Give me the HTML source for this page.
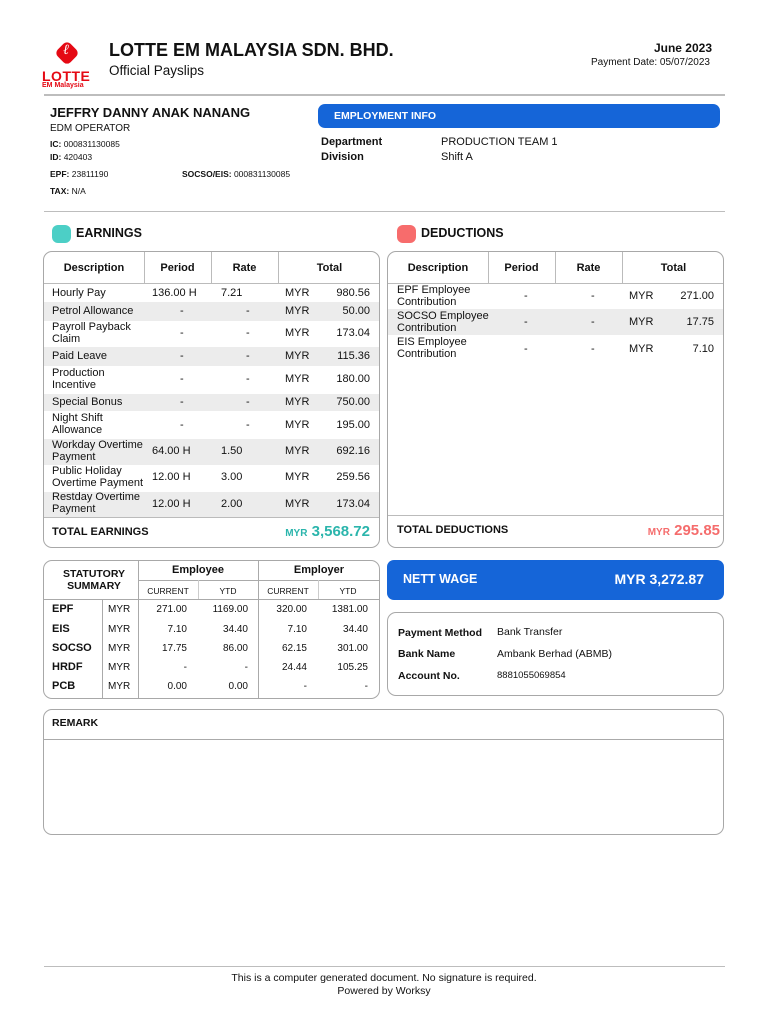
<!DOCTYPE html><html><head><meta charset="utf-8"><style>
*{margin:0;padding:0;box-sizing:border-box}
body{width:768px;height:1024px;background:#fff;font-family:"Liberation Sans",Arial,sans-serif;color:#111;position:relative;overflow:hidden}
.a{position:absolute;white-space:nowrap}
.b{font-weight:bold}
.box{position:absolute;border:1px solid #a8a8a8;border-radius:9px;overflow:hidden}
.row{position:absolute;left:0;right:0}
.g{background:#ececec}
.t{position:absolute;font-size:11px;line-height:12px;white-space:nowrap}
.hl{position:absolute;background:#bdbdbd}
.w{position:absolute;left:0;top:0;width:768px;height:1024px}
</style></head><body>
<!-- logo -->
<div class="a" style="left:58px;top:44px;width:18px;height:18px;background:#e50914;border-radius:5px;transform:rotate(45deg)"></div>
<div class="a" style="left:63px;top:43px;color:#fff;font:italic 14px 'Liberation Serif',serif">ℓ</div>
<div class="a b" style="left:42px;top:68px;color:#e50914;font-size:14px;letter-spacing:0.5px">LOTTE</div>
<div class="a b" style="left:42px;top:82px;color:#e50914;font-size:7px">EM Malaysia</div>
<div class="a b" style="left:109px;top:40px;font-size:18px">LOTTE EM MALAYSIA SDN. BHD.</div>
<div class="a" style="left:109px;top:63px;font-size:13.5px">Official Payslips</div>
<div class="a b" style="right:56px;top:41px;font-size:12px">June 2023</div>
<div class="a" style="right:58px;top:57px;font-size:10px">Payment Date: 05/07/2023</div>
<div class="hl" style="left:44px;top:94px;width:681px;height:2px"></div>
<!-- employee -->
<div class="a b" style="left:50px;top:105px;font-size:13px">JEFFRY DANNY ANAK NANANG</div>
<div class="a" style="left:50px;top:123px;font-size:10px">EDM OPERATOR</div>
<div class="a" style="left:50px;top:139px;font-size:8.5px"><b>IC:</b> 000831130085</div>
<div class="a" style="left:50px;top:152px;font-size:8.5px"><b>ID:</b> 420403</div>
<div class="a" style="left:50px;top:169px;font-size:8.5px"><b>EPF:</b> 23811190</div>
<div class="a" style="left:182px;top:169px;font-size:8.5px"><b>SOCSO/EIS:</b> 000831130085</div>
<div class="a" style="left:50px;top:186px;font-size:8.5px"><b>TAX:</b> N/A</div>
<div class="a" style="left:318px;top:104px;width:402px;height:24px;background:#1565d8;border-radius:7px"></div>
<div class="a b" style="left:334px;top:110px;color:#fff;font-size:10.5px">EMPLOYMENT INFO</div>
<div class="a b" style="left:321px;top:136px;font-size:11px">Department</div>
<div class="a b" style="left:321px;top:151px;font-size:11px">Division</div>
<div class="a" style="left:441px;top:136px;font-size:11px">PRODUCTION TEAM 1</div>
<div class="a" style="left:441px;top:151px;font-size:11px">Shift A</div>
<div class="hl" style="left:44px;top:211px;width:681px;height:1px"></div>
<!-- section titles -->
<div class="a" style="left:52px;top:225px;width:19px;height:18px;background:#4ccfc6;border-radius:6px"></div>
<div class="a b" style="left:76px;top:226px;font-size:12.5px">EARNINGS</div>
<div class="a" style="left:397px;top:225px;width:19px;height:18px;background:#f76c6c;border-radius:6px"></div>
<div class="a b" style="left:421px;top:226px;font-size:12.5px">DEDUCTIONS</div>

<!-- earnings -->
<div class="box" style="left:43px;top:251px;width:337px;height:297px">
<div class="row" style="top:31px;height:1px;background:#bbb"></div>
<div class="a" style="left:100px;top:0;width:1px;height:31px;background:#bbb"></div>
<div class="a" style="left:167px;top:0;width:1px;height:31px;background:#bbb"></div>
<div class="a" style="left:234px;top:0;width:1px;height:31px;background:#bbb"></div>
<div class="t b" style="left:0;width:100px;text-align:center;top:10px">Description</div>
<div class="t b" style="left:100px;width:67px;text-align:center;top:10px">Period</div>
<div class="t b" style="left:167px;width:67px;text-align:center;top:10px">Rate</div>
<div class="t b" style="left:234px;width:103px;text-align:center;top:10px">Total</div>
<div class="row g" style="top:50px;height:19px"></div>
<div class="row g" style="top:95px;height:19px"></div>
<div class="row g" style="top:142px;height:17px"></div>
<div class="row g" style="top:187px;height:26px"></div>
<div class="row g" style="top:240px;height:26px"></div>
<div class="row" style="top:265px;height:1px;background:#bbb"></div>
</div>
<div class="w">
<div class="t" style="left:52px;top:287px">Hourly Pay</div><div class="t" style="left:152px;top:287px">136.00 H</div><div class="t" style="left:221px;top:287px">7.21</div><div class="t" style="left:285px;top:287px">MYR</div><div class="t" style="right:398px;top:287px">980.56</div>
<div class="t" style="left:52px;top:305px">Petrol Allowance</div><div class="t" style="left:180px;top:305px">-</div><div class="t" style="left:246px;top:305px">-</div><div class="t" style="left:285px;top:305px">MYR</div><div class="t" style="right:398px;top:305px">50.00</div>
<div class="t" style="left:52px;top:321px">Payroll Payback<br>Claim</div><div class="t" style="left:180px;top:327px">-</div><div class="t" style="left:246px;top:327px">-</div><div class="t" style="left:285px;top:327px">MYR</div><div class="t" style="right:398px;top:327px">173.04</div>
<div class="t" style="left:52px;top:350px">Paid Leave</div><div class="t" style="left:180px;top:350px">-</div><div class="t" style="left:246px;top:350px">-</div><div class="t" style="left:285px;top:350px">MYR</div><div class="t" style="right:398px;top:350px">115.36</div>
<div class="t" style="left:52px;top:367px">Production<br>Incentive</div><div class="t" style="left:180px;top:373px">-</div><div class="t" style="left:246px;top:373px">-</div><div class="t" style="left:285px;top:373px">MYR</div><div class="t" style="right:398px;top:373px">180.00</div>
<div class="t" style="left:52px;top:396px">Special Bonus</div><div class="t" style="left:180px;top:396px">-</div><div class="t" style="left:246px;top:396px">-</div><div class="t" style="left:285px;top:396px">MYR</div><div class="t" style="right:398px;top:396px">750.00</div>
<div class="t" style="left:52px;top:412px">Night Shift<br>Allowance</div><div class="t" style="left:180px;top:419px">-</div><div class="t" style="left:246px;top:419px">-</div><div class="t" style="left:285px;top:419px">MYR</div><div class="t" style="right:398px;top:419px">195.00</div>
<div class="t" style="left:52px;top:439px">Workday Overtime<br>Payment</div><div class="t" style="left:152px;top:445px">64.00 H</div><div class="t" style="left:221px;top:445px">1.50</div><div class="t" style="left:285px;top:445px">MYR</div><div class="t" style="right:398px;top:445px">692.16</div>
<div class="t" style="left:52px;top:465px">Public Holiday<br>Overtime Payment</div><div class="t" style="left:152px;top:471px">12.00 H</div><div class="t" style="left:221px;top:471px">3.00</div><div class="t" style="left:285px;top:471px">MYR</div><div class="t" style="right:398px;top:471px">259.56</div>
<div class="t" style="left:52px;top:491px">Restday Overtime<br>Payment</div><div class="t" style="left:152px;top:498px">12.00 H</div><div class="t" style="left:221px;top:498px">2.00</div><div class="t" style="left:285px;top:498px">MYR</div><div class="t" style="right:398px;top:498px">173.04</div>
</div>
<div class="a b" style="left:52px;top:526px;font-size:11px">TOTAL EARNINGS</div>
<div class="a b" style="right:398px;top:523px;color:#2bb5ac;font-size:15px"><span style="font-size:10px">MYR</span> 3,568.72</div>

<!-- deductions -->
<div class="box" style="left:387px;top:251px;width:337px;height:297px">
<div class="row" style="top:31px;height:1px;background:#bbb"></div>
<div class="a" style="left:100px;top:0;width:1px;height:31px;background:#bbb"></div>
<div class="a" style="left:167px;top:0;width:1px;height:31px;background:#bbb"></div>
<div class="a" style="left:234px;top:0;width:1px;height:31px;background:#bbb"></div>
<div class="t b" style="left:0;width:100px;text-align:center;top:10px">Description</div>
<div class="t b" style="left:100px;width:67px;text-align:center;top:10px">Period</div>
<div class="t b" style="left:167px;width:67px;text-align:center;top:10px">Rate</div>
<div class="t b" style="left:234px;width:103px;text-align:center;top:10px">Total</div>
<div class="row g" style="top:57px;height:26px"></div>
<div class="row" style="top:263px;height:1px;background:#bbb"></div>
</div>
<div class="w">
<div class="t" style="left:397px;top:284px">EPF Employee<br>Contribution</div><div class="t" style="left:524px;top:290px">-</div><div class="t" style="left:591px;top:290px">-</div><div class="t" style="left:629px;top:290px">MYR</div><div class="t" style="right:54px;top:290px">271.00</div>
<div class="t" style="left:397px;top:310px">SOCSO Employee<br>Contribution</div><div class="t" style="left:524px;top:316px">-</div><div class="t" style="left:591px;top:316px">-</div><div class="t" style="left:629px;top:316px">MYR</div><div class="t" style="right:54px;top:316px">17.75</div>
<div class="t" style="left:397px;top:336px">EIS Employee<br>Contribution</div><div class="t" style="left:524px;top:343px">-</div><div class="t" style="left:591px;top:343px">-</div><div class="t" style="left:629px;top:343px">MYR</div><div class="t" style="right:54px;top:343px">7.10</div>
</div>
<div class="a b" style="left:397px;top:524px;font-size:11px">TOTAL DEDUCTIONS</div>
<div class="a b" style="right:48px;top:522px;color:#f56c6c;font-size:15px"><span style="font-size:10px">MYR</span> 295.85</div>

<!-- statutory -->
<div class="box" style="left:43px;top:560px;width:337px;height:139px">
<div class="a" style="left:94px;top:0;width:1px;height:139px;background:#aaa"></div>
<div class="a" style="left:58px;top:38px;width:1px;height:101px;background:#aaa"></div>
<div class="a" style="left:214px;top:0;width:1px;height:139px;background:#aaa"></div>
<div class="a" style="left:95px;top:19px;width:242px;height:1px;background:#aaa"></div>
<div class="a" style="left:0;top:38px;width:337px;height:1px;background:#aaa"></div>
<div class="a" style="left:154px;top:19px;width:1px;height:19px;background:#ccc"></div>
<div class="a" style="left:274px;top:19px;width:1px;height:19px;background:#ccc"></div>
</div>
<div class="t b" style="left:44px;width:100px;text-align:center;top:568px;font-size:10.5px">STATUTORY<br>SUMMARY</div>
<div class="t b" style="left:138px;width:120px;text-align:center;top:564px">Employee</div>
<div class="t b" style="left:258px;width:122px;text-align:center;top:564px">Employer</div>
<div class="t" style="left:138px;width:60px;text-align:center;top:585px;font-size:8.5px">CURRENT</div>
<div class="t" style="left:198px;width:60px;text-align:center;top:585px;font-size:8.5px">YTD</div>
<div class="t" style="left:258px;width:60px;text-align:center;top:585px;font-size:8.5px">CURRENT</div>
<div class="t" style="left:318px;width:60px;text-align:center;top:585px;font-size:8.5px">YTD</div>
<div class="w">
<div class="t b" style="left:52px;top:603px">EPF</div><div class="t" style="left:108px;top:604px;font-size:10px">MYR</div><div class="t" style="right:581px;top:604px;font-size:10px">271.00</div><div class="t" style="right:520px;top:604px;font-size:10px">1169.00</div><div class="t" style="right:461px;top:604px;font-size:10px">320.00</div><div class="t" style="right:400px;top:604px;font-size:10px">1381.00</div>
<div class="t b" style="left:52px;top:623px">EIS</div><div class="t" style="left:108px;top:624px;font-size:10px">MYR</div><div class="t" style="right:581px;top:624px;font-size:10px">7.10</div><div class="t" style="right:520px;top:624px;font-size:10px">34.40</div><div class="t" style="right:461px;top:624px;font-size:10px">7.10</div><div class="t" style="right:400px;top:624px;font-size:10px">34.40</div>
<div class="t b" style="left:52px;top:642px">SOCSO</div><div class="t" style="left:108px;top:643px;font-size:10px">MYR</div><div class="t" style="right:581px;top:643px;font-size:10px">17.75</div><div class="t" style="right:520px;top:643px;font-size:10px">86.00</div><div class="t" style="right:461px;top:643px;font-size:10px">62.15</div><div class="t" style="right:400px;top:643px;font-size:10px">301.00</div>
<div class="t b" style="left:52px;top:661px">HRDF</div><div class="t" style="left:108px;top:662px;font-size:10px">MYR</div><div class="t" style="right:581px;top:662px;font-size:10px">-</div><div class="t" style="right:520px;top:662px;font-size:10px">-</div><div class="t" style="right:461px;top:662px;font-size:10px">24.44</div><div class="t" style="right:400px;top:662px;font-size:10px">105.25</div>
<div class="t b" style="left:52px;top:680px">PCB</div><div class="t" style="left:108px;top:681px;font-size:10px">MYR</div><div class="t" style="right:581px;top:681px;font-size:10px">0.00</div><div class="t" style="right:520px;top:681px;font-size:10px">0.00</div><div class="t" style="right:461px;top:681px;font-size:10px">-</div><div class="t" style="right:400px;top:681px;font-size:10px">-</div>
</div>

<!-- nett wage -->
<div class="a" style="left:387px;top:560px;width:337px;height:40px;background:#1565d8;border-radius:7px"></div>
<div class="a b" style="left:403px;top:572px;color:#fff;font-size:12.5px">NETT WAGE</div>
<div class="a b" style="right:64px;top:571px;color:#fff;font-size:14px">MYR 3,272.87</div>
<div class="box" style="left:387px;top:612px;width:337px;height:84px"></div>
<div class="a b" style="left:398px;top:627px;font-size:10.5px">Payment Method</div>
<div class="a b" style="left:398px;top:648px;font-size:10.5px">Bank Name</div>
<div class="a b" style="left:398px;top:670px;font-size:10.5px">Account No.</div>
<div class="a" style="left:497px;top:626px;font-size:10.5px">Bank Transfer</div>
<div class="a" style="left:497px;top:648px;font-size:10.5px">Ambank Berhad (ABMB)</div>
<div class="a" style="left:497px;top:670px;font-size:9.5px">8881055069854</div>

<!-- remark -->
<div class="box" style="left:43px;top:709px;width:681px;height:126px"><div class="row" style="top:29px;height:1px;background:#aaa"></div></div>
<div class="a b" style="left:52px;top:717px;font-size:10.5px">REMARK</div>

<div class="hl" style="left:44px;top:966px;width:681px;height:1px"></div>
<div class="a" style="left:0;width:768px;text-align:center;top:972px;font-size:10.5px">This is a computer generated document. No signature is required.</div>
<div class="a" style="left:0;width:768px;text-align:center;top:985px;font-size:10.5px">Powered by Worksy</div>
</body></html>
